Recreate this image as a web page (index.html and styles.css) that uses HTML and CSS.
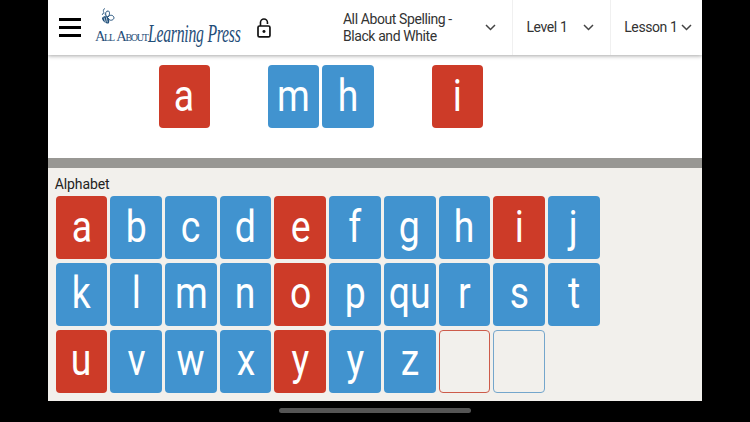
FILE: index.html
```html
<!DOCTYPE html>
<html lang="en">

<head>
    <meta charset="UTF-8" />
    <title>Letter Tiles</title>
    <link rel="stylesheet" href="styles.css">
</head>

<body>

    <div class="app">
        <header class="topbar">
            <div class="menu-btn"><span></span><span></span><span></span></div>

            <div class="logo">
                <svg class="bee" width="14" height="18" viewBox="0 0 14 18">
                    <path d="M3 5C2 3 2 1 4 .5M3.500 6C2 5 1 5.500 1.500 7" fill="none" stroke="#1f4e79" stroke-width=".8" />
                    <path d="M5 8C4 5 5 3 7 3s2 4 0 6zM6.500 9.500C8 7 11 6.500 12.500 8.500s-1 4.500-4 3.500z" fill="#fff" stroke="#1f4e79" stroke-width="1" />
                    <path d="M1 10c1-2 4-2.500 5.500-1S9 14 7.500 15.500C5 16 1 13 1 10z" fill="#1f4e79" />
                    <path d="M3 9.500l1.500 5M5.300 9.300l1 5" stroke="#fff" stroke-width=".7" />
                </svg>
                <span class="logo-caps">All About</span><span class="logo-script">Learning Press</span>
            </div>

            <svg class="lock" width="14" height="20" viewBox="0 0 14 20">
                <path d="M3.5 8V4.500a3.500 3.500 0 0 1 7 0V6" fill="none" stroke="#111" stroke-width="1.600" />
                <rect x="1" y="8" width="12" height="11" rx="1.500" fill="none" stroke="#111" stroke-width="1.700" />
                <circle cx="7" cy="13.500" r="1.500" fill="#111" />
            </svg>

            <div class="picker picker-course">
                <span>All About Spelling -<br>Black and White</span>
                <svg class="chev" width="11" height="7" viewBox="0 0 11 7"><path d="M1 1l4.500 4.500L10 1" /></svg>
            </div>
            <div class="picker picker-level">
                <span>Level 1</span>
                <svg class="chev" width="11" height="7" viewBox="0 0 11 7"><path d="M1 1l4.500 4.500L10 1" /></svg>
            </div>
            <div class="picker picker-lesson">
                <span>Lesson 1</span>
                <svg class="chev" width="11" height="7" viewBox="0 0 11 7"><path d="M1 1l4.500 4.500L10 1" /></svg>
            </div>
        </header>

        <section class="board">
            <div class="tile red"><span>a</span></div>
            <div class="word">
                <div class="tile blue"><span>m</span></div>
                <div class="tile blue"><span>h</span></div>
            </div>
            <div class="tile red"><span>i</span></div>
        </section>

        <div class="divider"></div>

        <section class="alphabet">
            <div class="alphabet-title">Alphabet</div>
            <div class="tile-grid">
                <div class="tile red"><span>a</span></div>
                <div class="tile blue"><span>b</span></div>
                <div class="tile blue"><span>c</span></div>
                <div class="tile blue"><span>d</span></div>
                <div class="tile red"><span>e</span></div>
                <div class="tile blue"><span>f</span></div>
                <div class="tile blue"><span>g</span></div>
                <div class="tile blue"><span>h</span></div>
                <div class="tile red"><span>i</span></div>
                <div class="tile blue"><span>j</span></div>
                <div class="tile blue"><span>k</span></div>
                <div class="tile blue"><span>l</span></div>
                <div class="tile blue"><span>m</span></div>
                <div class="tile blue"><span>n</span></div>
                <div class="tile red"><span>o</span></div>
                <div class="tile blue"><span>p</span></div>
                <div class="tile blue"><span>qu</span></div>
                <div class="tile blue"><span>r</span></div>
                <div class="tile blue"><span>s</span></div>
                <div class="tile blue"><span>t</span></div>
                <div class="tile red"><span>u</span></div>
                <div class="tile blue"><span>v</span></div>
                <div class="tile blue"><span>w</span></div>
                <div class="tile blue"><span>x</span></div>
                <div class="tile red"><span>y</span></div>
                <div class="tile blue"><span>y</span></div>
                <div class="tile blue"><span>z</span></div>
                <div class="tile empty-red"></div>
                <div class="tile empty-blue"></div>
            </div>
        </section>
    </div>

    <div class="home-bar"></div>

</body>

</html>
```

FILE: styles.css
```css
* {
    box-sizing: border-box;
}

html,
body {
    margin: 0;
    height: 422px;
    overflow: hidden;
    background: #000;
}

body {
    font-family: Roboto, sans-serif;
}

.app {
    width: 654px;
    height: 401px;
    margin: 0 auto;
    background: #fff;
    display: flex;
    flex-direction: column;
}

/* top bar */
.topbar {
    height: 55px;
    display: flex;
    align-items: center;
    background: #fff;
    box-shadow: 0 1px 4px rgba(0, 0, 0, 0.35);
    position: relative;
    color: #333;
    font-size: 14px;
    letter-spacing: -0.4px;
    line-height: 17px;
    white-space: nowrap;
}

.menu-btn {
    width: 22px;
    margin-left: 11px;
    display: flex;
    flex-direction: column;
    gap: 5px;
}

.menu-btn span {
    height: 3px;
    background: #000;
}

.logo {
    width: 145px;
    margin-left: 14px;
    height: 40px;
    position: relative;
    color: #1f4e79;
    display: flex;
    align-items: flex-end;
}

.bee {
    position: absolute;
    left: 6px;
    top: 0;
}

.logo-caps {
    font-family: "Liberation Serif", serif;
    font-variant: small-caps;
    font-size: 14.500px;
    letter-spacing: -1.300px;
    word-spacing: 1px;
    line-height: 16px;
    margin-bottom: 4px;
}

.logo-script {
    font-family: "Liberation Serif", serif;
    font-style: italic;
    font-size: 25px;
    letter-spacing: -0.4px;
    line-height: 28px;
    margin-left: 1px;
    transform: scaleX(0.63);
    transform-origin: left center;
}

.lock {
    margin-left: 17px;
    margin-top: 1px;
}

.picker {
    height: 55px;
    display: flex;
    align-items: center;
    justify-content: space-between;
}

.picker-course {
    width: 170px;
    margin-left: 72px;
    padding-right: 16px;
}

.picker-level {
    width: 98px;
    padding: 0 16px 0 13px;
    border-left: 1px solid #f0f0f0;
}

.picker-lesson {
    width: 92px;
    padding: 0 10px 0 13px;
    border-left: 1px solid #f0f0f0;
}

.chev {
    flex: none;
}

.chev path {
    fill: none;
    stroke: #444;
    stroke-width: 1.500;
}

/* tiles */
.tile {
    height: 63px;
    width: 51.700px;
    border-radius: 4px;
    color: #fff;
    display: flex;
    align-items: center;
    justify-content: center;
    font-weight: 400;
    font-size: 44px;
    line-height: 1;
}

.tile span {
    display: block;
    transform: scaleX(0.85);
    margin-top: -2px;
}

.red {
    background: #cd3b28;
}

.blue {
    background: #4193cf;
}

.empty-red {
    border: 1px solid #cd5b4a;
}

.empty-blue {
    border: 1px solid #74a6cc;
}

.board {
    height: 103px;
    padding: 10px 0 0 110.500px;
    display: flex;
    align-items: flex-start;
    gap: 57.600px;
}

.word {
    display: flex;
    gap: 3px;
}

.divider {
    height: 10px;
    background: #989793;
}

.alphabet {
    flex: 1;
    background: #f2f0ec;
    padding: 8px 0 0 7.700px;
}

.alphabet-title {
    margin-left: -1px;
    font-size: 14px;
    letter-spacing: -0.1px;
    line-height: 17px;
    color: #222;
    margin-bottom: 3px;
}

.tile-grid {
    display: grid;
    grid-template-columns: repeat(10, 51.700px);
    grid-auto-rows: 62.700px;
    column-gap: 3px;
    row-gap: 4.300px;
}

.home-bar {
    width: 192px;
    height: 5px;
    margin: 7px auto 0;
    border-radius: 3px;
    background: #555;
}
```
